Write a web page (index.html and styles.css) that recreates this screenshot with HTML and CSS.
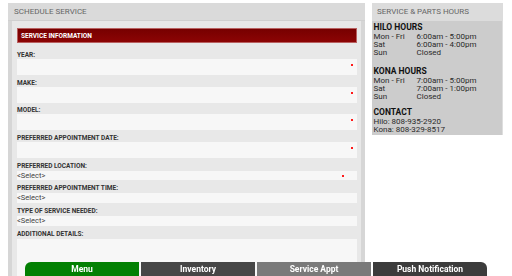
FILE: index.html
```html
<!DOCTYPE html>
<html>
<head>
<meta charset="utf-8">
<link rel="stylesheet" href="styles.css">
</head>
<body>
<div class="page">
  <div class="panel-left">
    <div class="panel-head">SCHEDULE SERVICE</div>
    <div class="panel-body">
      <div class="section-bar">SERVICE INFORMATION</div>
      <div class="field">
        <div class="lbl">YEAR:</div>
        <div class="inp"><span class="req"></span></div>
      </div>
      <div class="field">
        <div class="lbl">MAKE:</div>
        <div class="inp"><span class="req"></span></div>
      </div>
      <div class="field">
        <div class="lbl">MODEL:</div>
        <div class="inp"><span class="req"></span></div>
      </div>
      <div class="field">
        <div class="lbl">PREFERRED APPOINTMENT DATE:</div>
        <div class="inp"><span class="req"></span></div>
      </div>
      <div class="field">
        <div class="lbl lbl-s">PREFERRED LOCATION:</div>
        <div class="sel">&lt;Select&gt;<span class="req req-s"></span></div>
      </div>
      <div class="field">
        <div class="lbl lbl-s">PREFERRED APPOINTMENT TIME:</div>
        <div class="sel">&lt;Select&gt;</div>
      </div>
      <div class="field">
        <div class="lbl lbl-s">TYPE OF SERVICE NEEDED:</div>
        <div class="sel">&lt;Select&gt;</div>
      </div>
      <div class="field">
        <div class="lbl lbl-s">ADDITIONAL DETAILS:</div>
        <div class="txt"></div>
      </div>
    </div>
  </div>
  <div class="panel-right">
    <div class="panel-head head-r">SERVICE &amp; PARTS HOURS</div>
    <div class="hours">
      <div class="group">
        <div class="gh">HILO HOURS</div>
        <div class="hr"><span class="day">Mon - Fri</span><span>6:00am - 5:00pm</span></div>
        <div class="hr"><span class="day">Sat</span><span>6:00am - 4:00pm</span></div>
        <div class="hr"><span class="day">Sun</span><span>Closed</span></div>
      </div>
      <div class="group group-2">
        <div class="gh">KONA HOURS</div>
        <div class="hr"><span class="day">Mon - Fri</span><span>7:00am - 5:00pm</span></div>
        <div class="hr"><span class="day">Sat</span><span>7:00am - 1:00pm</span></div>
        <div class="hr"><span class="day">Sun</span><span>Closed</span></div>
      </div>
      <div class="group group-3">
        <div class="gh">CONTACT</div>
        <div class="hr">Hilo: 808-935-2920</div>
        <div class="hr">Kona: 808-329-8517</div>
      </div>
    </div>
  </div>
</div>
<nav class="tabs">
  <div class="tab tab-menu">Menu</div>
  <div class="tab tab-inv">Inventory</div>
  <div class="tab tab-svc">Service Appt</div>
  <div class="tab tab-push">Push Notification</div>
</nav>
</body>
</html>
```
FILE: styles.css
```css
html, body {
  margin: 0;
  padding: 0;
  background: #ffffff;
  overflow: hidden;
}
body {
  padding: 3px 9px 0 8px;
  font-family: Roboto, "Liberation Sans", sans-serif;
  color: #333;
}
.page {
  display: flex;
  gap: 7px;
  align-items: flex-start;
}
.panel-left {
  width: 357px;
  flex: none;
}
.panel-head {
  background: #dadada;
  height: 18px;
  line-height: 18px;
  font-size: 8px;
  color: #666;
  padding-left: 6px;
  border-bottom: 1px solid #d0d0d0;
  box-sizing: border-box;
}
.panel-body {
  background: #e8e8e8;
  border-left: 4px solid #d6d6d6;
  border-right: 4px solid #d6d6d6;
  padding: 7px 4px 40px 5px;
  height: 260px;
  box-sizing: border-box;
}
.section-bar {
  height: 15px;
  line-height: 14px;
  box-sizing: border-box;
  background: linear-gradient(#770000, #8c0404);
  border: 1px solid #b86060;
  color: #fff;
  font-weight: bold;
  font-size: 6.5px;
  padding-left: 3px;
  margin-bottom: 4.5px;
}
.field {
  display: flex;
  flex-direction: column;
}
.lbl {
  font-size: 6.5px;
  font-weight: bold;
  color: #333;
  line-height: 8px;
  padding-top: 3.5px;
}
.lbl-s {
  padding-top: 4.2px;
  padding-bottom: 1px;
}
.inp {
  height: 16px;
  background: #f7f7f7;
  position: relative;
}
.sel {
  height: 9.5px;
  line-height: 9.5px;
  background: #f7f7f7;
  font-size: 7.5px;
  color: #444;
  position: relative;
}
.txt {
  height: 40px;
  background: #f7f7f7;
}
.req {
  position: absolute;
  right: 4px;
  top: 5px;
  width: 2px;
  height: 2px;
  background: #ff1a1a;
}
.req-s {
  right: 13px;
  top: 4px;
}
.panel-right {
  width: 131px;
  flex: none;
}
.head-r {
  background: #dcdcdc;
  padding-left: 5px;
  border-bottom: none;
}
.hours {
  background: #cccccc;
  border-right: 1px solid #dedede;
  padding: 1px 0 4px 1.5px;
  height: 114px;
  box-sizing: border-box;
  color: #2a2a2a;
}
.gh {
  font-size: 8.5px;
  font-weight: bold;
  line-height: 10px;
  color: #111;
  margin-bottom: 1px;
}
.hr {
  font-size: 8px;
  line-height: 8.1px;
  display: flex;
}
.day {
  width: 43px;
  flex: none;
}
.group-2 {
  margin-top: 8.5px;
}
.group-3 {
  margin-top: 5.5px;
}
.tabs {
  position: fixed;
  left: 25px;
  bottom: -4px;
  width: 462px;
  height: 18px;
  display: flex;
  gap: 2px;
}
.tab {
  flex: 1;
  color: #fff;
  font-weight: bold;
  font-size: 8.5px;
  line-height: 14px;
  text-align: center;
}
.tab-menu {
  background: #038003;
  border-top-left-radius: 6px;
}
.tab-inv {
  background: #464646;
}
.tab-svc {
  background: #7a7a7a;
}
.tab-push {
  background: #3c3c3c;
  border-top-right-radius: 6px;
}
```
